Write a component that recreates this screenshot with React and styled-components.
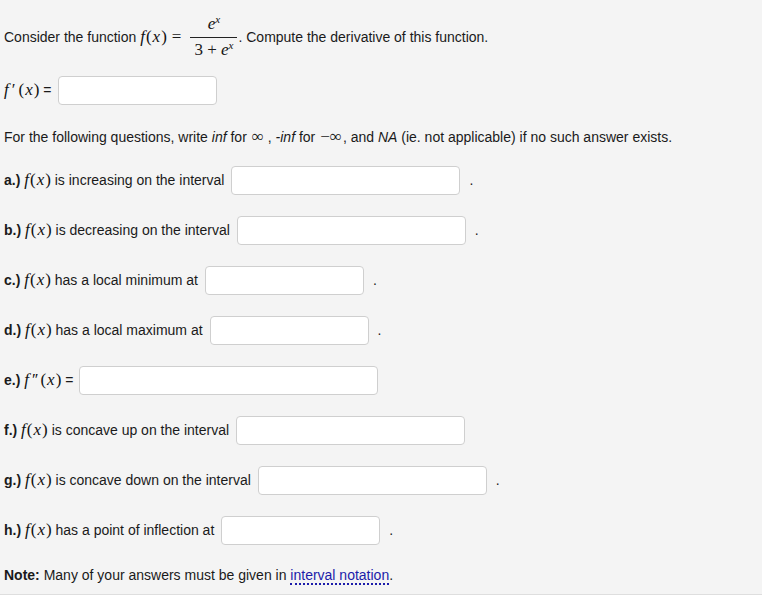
import React from 'react';
import styled, { createGlobalStyle } from 'styled-components';

const Global = createGlobalStyle`
  html, body {
    margin: 0;
    padding: 0;
    background: #ffffff;
  }
  body {
    font-family: "Liberation Sans", Arial, sans-serif;
    font-size: 14px;
    color: #1a1a1a;
  }
`;

const Page = styled.div`
  width: 762px;
  height: 582px;
  box-sizing: content-box;
  padding-top: 12px;
  background: #f4f4f4;
  border-bottom: 1px solid #dedede;
`;

const Line = styled.div`
  display: flex;
  align-items: center;
  height: ${({ h }) => h}px;
  padding-left: 4px;
`;

const Text = styled.span`
  white-space: pre;
`;

const Math = styled.span`
  font-family: "Liberation Serif", "Times New Roman", serif;
  font-style: italic;
  font-size: 17px;
  color: #111;
`;

const Upright = styled.span`
  font-family: "Liberation Serif", "Times New Roman", serif;
  font-style: normal;
  font-size: 17px;
  margin: 0 ${({ right }) => right ?? 0}px 0 ${({ left }) => left ?? 0}px;
`;

const Fn = styled.span`
  margin-right: 1px;
`;

const Var = styled.span`
  padding: 0 1px;
`;

const Prime = styled.span`
  font-family: "Liberation Serif", "Times New Roman", serif;
  font-style: normal;
  letter-spacing: -1px;
  margin: 0 ${({ single }) => (single ? 4 : 3)}px 0 2px;
`;

const Sup = styled.sup`
  font-size: 11px;
  vertical-align: 6px;
  line-height: 0;
`;

const Frac = styled.span`
  display: inline-flex;
  flex-direction: column;
  align-items: center;
  margin: 0 1px 0 4px;
`;

const Num = styled.span`
  padding: 0 2px 4px;
  line-height: 18px;
`;

const Den = styled.span`
  border-top: 1px solid #222;
  padding: 3px 4px 0;
  line-height: 18px;
`;

const Bold = styled.b`
  font-weight: bold;
`;

const Field = styled.input`
  box-sizing: border-box;
  width: ${({ w }) => w}px;
  height: 29px;
  margin-left: ${({ gap }) => gap ?? 7}px;
  background: #fff;
  border: 1px solid #cfcfcf;
  border-radius: 4px;
  outline: none;
`;

const Dot = styled.span`
  margin-left: 9px;
`;

const Link = styled.a`
  color: #1c1caa;
  text-decoration: none;
  border-bottom: 2px dotted #1c1caa;
  line-height: 15px;
`;

const F = ({ primes = 0 }) => (
  <Math>
    <Fn>f</Fn>
    {primes > 0 && <Prime single={primes === 1}>{'\u2032'.repeat(primes)}</Prime>}
    <Upright>(</Upright>
    <Var>x</Var>
    <Upright>)</Upright>
  </Math>
);

const Question = ({ tag, text, w, period }) => (
  <Line h={50}>
    <Text>
      <Bold>{tag}</Bold> <F /> {text}
    </Text>
    <Field w={w} />
    {period && <Dot>.</Dot>}
  </Line>
);

const App = () => (
  <>
    <Global />
    <Page>
      <Line h={50}>
        <Text>Consider the function </Text>
        <F />
        <Upright left={5} right={5}>
          =
        </Upright>
        <Frac>
          <Num>
            <Math>
              e<Sup>x</Sup>
            </Math>
          </Num>
          <Den>
            <Upright>3 + </Upright>
            <Math>
              e<Sup>x</Sup>
            </Math>
          </Den>
        </Frac>
        <Text>. Compute the derivative of this function.</Text>
      </Line>
      <Line h={56}>
        <Text>
          <F primes={1} /> =
        </Text>
        <Field w={159} gap={7} />
      </Line>
      <Line h={37}>
        <Text>
          For the following questions, write <i>inf</i> for{' '}
          <Upright left={1} right={4}>
            ∞
          </Upright>
          , <i>-inf</i> for{' '}
          <Upright left={1} right={1}>
            −∞
          </Upright>
          , and <i>NA</i> (ie. not applicable) if no such answer exists.
        </Text>
      </Line>
      <Question tag="a.)" text="is increasing on the interval" w={229} period />
      <Question tag="b.)" text="is decreasing on the interval" w={229} period />
      <Question tag="c.)" text="has a local minimum at" w={159} period />
      <Question tag="d.)" text="has a local maximum at" w={159} period />
      <Line h={50}>
        <Text>
          <Bold>e.)</Bold> <F primes={2} /> =
        </Text>
        <Field w={299} gap={6} />
      </Line>
      <Question tag="f.)" text="is concave up on the interval" w={229} />
      <Question tag="g.)" text="is concave down on the interval" w={229} period />
      <Question tag="h.)" text="has a point of inflection at" w={159} period />
      <Line h={39}>
        <Text>
          <Bold>Note:</Bold> Many of your answers must be given in <Link href="#">interval notation</Link>.
        </Text>
      </Line>
    </Page>
  </>
);

export default App;
